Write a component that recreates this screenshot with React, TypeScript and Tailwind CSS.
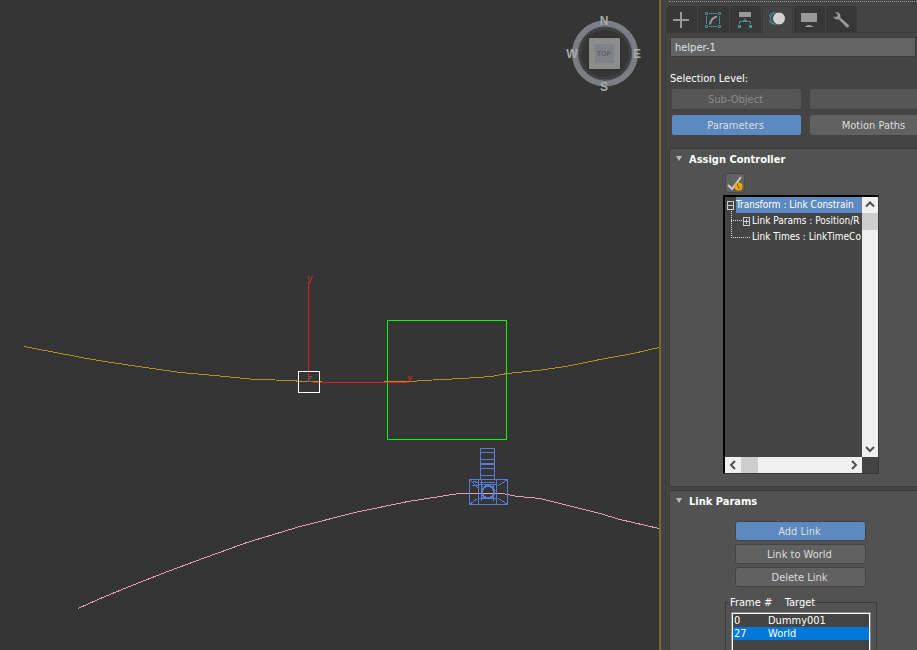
import type { ReactNode } from "react";
import clsx from "clsx";

const tabs: { label: string; active?: boolean; icon: ReactNode }[] = [
  {
    label: "Create",
    icon: <path d="M8 0v16M0 8h16" stroke="#999" strokeWidth="2" />,
  },
  {
    label: "Modify",
    icon: (
      <g fill="none">
        <path d="M4 1.5h8M4 14.500h8M1.500 4v8M14.500 4v8" stroke="#3f8f8f" />
        <path d="M.5.5h2v2h-2zM13.500.5h2v2h-2zM.5 13.500h2v2h-2zM13.500 13.500h2v2h-2z" stroke="#3f9494" />
        <path d="M5 12.500C5.500 8 7.500 5.500 12 4.500" stroke="#999" strokeWidth="2" />
      </g>
    ),
  },
  {
    label: "Hierarchy",
    icon: (
      <g>
        <path d="M2 0h12v5H2z" fill="#999" />
        <path d="M8 6v4M2.500 12V9.500h11V12" fill="none" stroke="#3f8f8f" />
        <path d="M1 13h3v3H1zM12 13h3v3h-3zM6 8h4v2H6z" fill="#3f9494" />
      </g>
    ),
  },
  {
    label: "Motion",
    active: true,
    icon: (
      <g>
        <circle cx="5" cy="6.500" r="5.500" fill="none" stroke="#3f9494" />
        <circle cx="7.500" cy="6.500" r="6" fill="#3c4a4a" stroke="#3fa0a0" />
        <circle cx="10" cy="6.500" r="6.500" fill="#d2d2d2" stroke="#3a4444" strokeWidth="1" />
      </g>
    ),
  },
  {
    label: "Display",
    icon: <path d="M0 1h16v9H0zM6 13h4v1h2v1H4v-1h2z" fill="#999" />,
  },
  {
    label: "Utilities",
    icon: (
      <path
        d="M2 .5C5-.5 7.500 1 7.500 4L7.300 5.500l8.200 7.300a1.500 1.500 0 0 1-2.300 2.200L6 7.400C3.500 8 .8 7 .3 4.300L2.800 5.200 4.600 4 4.300 1.800z"
        fill="#999"
      />
    ),
  },
];

const links = [
  { frame: 0, target: "Dummy001" },
  { frame: 27, target: "World", selected: true },
];

const arrows = {
  up: "M4 9.500l4-4 4 4",
  down: "M4 6l4 4 4-4",
  left: "M10 4L6 8l4 4",
  right: "M6 4l4 4-4 4",
};

function ScrollButton({ dir }: { dir: keyof typeof arrows }) {
  return (
    <button type="button" aria-label={`Scroll ${dir}`} className="size-4 shrink-0 bg-[#f0f0f0]">
      <svg viewBox="0 0 16 16" className="size-4">
        <path d={arrows[dir]} fill="none" stroke="#505050" strokeWidth="2" />
      </svg>
    </button>
  );
}

function Button({
  children,
  active,
  disabled,
  label,
  className,
}: {
  children?: ReactNode;
  active?: boolean;
  disabled?: boolean;
  label?: string;
  className?: string;
}) {
  return (
    <button
      type="button"
      disabled={disabled}
      aria-label={label}
      className={clsx(
        "w-[131px] shrink-0 rounded-[3px] border border-[#444] pr-0.5 text-center",
        active ? "bg-[#5d89c1] text-[#dedede]" : disabled ? "bg-[#565656] text-[#8c8c8c]" : "bg-[#616161] text-[#dcdcdc]",
        className
      )}
    >
      {children}
    </button>
  );
}

function Rollout({ title, className, children }: { title: string; className?: string; children: ReactNode }) {
  return (
    <section className={clsx("rounded-l-[3px] border border-r-0 border-[#3c3c3c] bg-[#525252]", className)}>
      <h2 className="flex h-5 items-center pl-1.5 font-bold text-white">
        <svg viewBox="0 0 6 5" className="mr-[7px] mb-0.5 h-[5px] w-1.5" aria-hidden="true">
          <path d="M0 0h6L3 5z" fill="#bbb" />
        </svg>
        {title}
      </h2>
      {children}
    </section>
  );
}

function ExpandBox({ open }: { open?: boolean }) {
  return (
    <svg viewBox="0 0 7 9" className="h-[9px] w-[7px] shrink-0" shapeRendering="crispEdges">
      <path d="M.5 .5h6v8h-6z" fill="#444" stroke="#ccc" />
      <path d={open ? "M1 4.500h5" : "M1 4.500h5M3.500 2v5"} stroke="#ccc" />
    </svg>
  );
}

function Compass() {
  return (
    <svg viewBox="0 0 80 80" className="absolute top-[13px] right-[14px] size-20" aria-label="View cube">
      <circle cx="40" cy="40.500" r="30" fill="none" stroke="#7b7f84" strokeWidth="6" />
      <circle cx="40" cy="40.500" r="26.500" fill="none" stroke="#555a60" strokeWidth="1" />
      <circle cx="40" cy="40.500" r="24.500" fill="none" stroke="#464a4e" strokeWidth="1" />
      <path d="M23 24h33v33H23z" fill="#303030" />
      <path d="M24 25h31v31H24z" fill="#8c8c8c" />
      <path d="M30 31h19v19H30z" fill="#7f8389" />
      <g
        fill="#a8a8a8"
        textAnchor="middle"
        className="font-['Liberation_Sans'] text-[12px] font-bold"
      >
        <text x="39" y="12">N</text>
        <text x="72" y="45">E</text>
        <text x="39" y="78">S</text>
        <text x="7" y="45">W</text>
        <text x="39" y="43" fill="#5c6066" className="text-[7px]">TOP</text>
      </g>
    </svg>
  );
}

function Scene() {
  return (
    <svg className="absolute inset-0 size-full" fill="none" shapeRendering="crispEdges" aria-label="Top view">
      {/* motion paths */}
      <path
        d="M24 346.500L45 350.500 87 358.500 105 361.500 145 367.500 180 372.500 215 375.500 255 379.500 295 380.500 298 381.500H322M384 381.500H412L423 380.500 462 378.500 492 376.500 507 373.500 537 370.500 566 366.500 600 359.500 633 353.500 659 347.500"
        stroke="#b3921c"
      />
      <path
        d="M78 608.500L105 596.500 132 585.500 165 572.500 200 559.500 247 542.500 300 526.500 355 512.500 408 501.500 440 496.500 459 493.500H502L518 496.500 540 498.500 560 503.500 600 513.500 620 519.500 659 528.500"
        stroke="#e9a0b6"
      />
      {/* camera */}
      <g stroke="#587bd6">
        <path d="M480.500 479V448.500H494.500V479M480 452.500h14M480 459.500h14M480 468.500h14M480 475.500h14" />
        <path d="M480 464h14" strokeWidth="2" />
        <path d="M469.500 479.500h38v25h-38zM478.500 479.500v25M496.500 479.500v25M478 484.500h19M478 498.500h19" />
        <path d="M469.500 479.500l9 9M507.500 479.500l-9 6M469.500 504.500l8-6M507.500 504.500l-9-6M473 481l5 2M472 486l6-1M480 482h15M481 479v22M493 484v17" />
        <circle cx="488" cy="492" r="6" strokeWidth="2" />
        <path d="M481 485l3 3M494 485l-3 3M481 499l3-2M494 499l-3-2" />
      </g>
      <path d="M483 493.500h9" stroke="#e9a0b6" />
      {/* dummy and helper */}
      <path d="M387.500 320.500h119v119h-119z" stroke="#00ff00" />
      <path d="M308.500 282v99M313 382.500h96" stroke="#d42020" />
      <path d="M298.500 371.500h21v21h-21z" stroke="#fff" />
      <g className="font-['Liberation_Sans'] text-[11px]" fill="#c82828">
        <text x="307" y="282">y</text>
        <text x="407" y="382">x</text>
        <text x="307" y="382" fill="#6b6464">z</text>
      </g>
    </svg>
  );
}

export default function App() {
  return (
    <div className="flex h-screen overflow-hidden bg-[#444] font-['DejaVu_Sans_Condensed','DejaVu_Sans',sans-serif] text-[11px] leading-[13px] text-white">
      <main className="relative min-w-0 flex-1 border-r-2 border-[#7d6726] bg-[#353535]">
        <Scene />
        <Compass />
      </main>

      <aside className="flex w-64 shrink-0 flex-col overflow-hidden pl-1">
        <div className="mt-px ml-1 h-px border-t border-dotted border-[#999]" />
        <nav className="mt-1 flex h-[27px] shrink-0 gap-px border-b border-[#3a3a3a] pl-px">
          {tabs.map((tab) => (
            <button
              key={tab.label}
              type="button"
              aria-label={tab.label}
              className={clsx(
                "flex w-[31px] justify-center rounded-t-[4px]",
                tab.active ? "-mb-px border border-b-0 border-[#3a3a3a] bg-[#444] pt-[5px]" : "bg-[#373737] pt-1.5"
              )}
            >
              <svg viewBox="0 0 17 17" className="size-[17px] shrink-0">
                {tab.icon}
              </svg>
            </button>
          ))}
        </nav>

        <div className="flex min-h-0 flex-1 flex-col border-l border-[#3a3a3a] pl-[3px]">
          <input
            aria-label="Object name"
            defaultValue="helper-1"
            className="mt-1 mr-px ml-px h-5 shrink-0 border border-[#3c3c3c] bg-[#646464] px-1 text-[#e2e2e2]"
          />
          <p className="mt-[15px] ml-px h-[13px]">Selection Level:</p>
          <div className="mt-[3px] ml-0.5 grid grid-cols-[131px_131px] gap-x-[7px] gap-y-1">
            <Button disabled className="h-[22px]">Sub-Object</Button>
            <Button disabled label="Sub-object type" className="h-[22px]" />
            <Button active className="h-[22px]">Parameters</Button>
            <Button className="h-[22px]">Motion Paths</Button>
          </div>

          <Rollout title="Assign Controller" className="mt-3 h-[339px] shrink-0">
            <button
              type="button"
              aria-label="Assign Controller"
              className="mt-1 ml-[55px] block size-5 rounded-[3px] border border-[#484848] bg-[#616161]"
            >
              <svg viewBox="0 0 18 18" className="size-[18px]">
                <path d="M2 11l4 4L15 3" fill="none" stroke="#ccc" strokeWidth="2" />
                <circle cx="12.500" cy="12.500" r="4" fill="#f5a800" />
                <path d="M11.500 9.500v2.500l1.500 1v2" fill="none" stroke="#6b4800" strokeWidth="1" />
              </svg>
            </button>

            <div className="mt-0.5 ml-[53px] grid h-[279px] w-[156px] grid-cols-[minmax(0,1fr)_16px] grid-rows-[minmax(0,1fr)_16px] border border-t-2 border-l-2 border-[#383838] border-t-black border-l-black bg-[#444]">
              <ul className="relative overflow-hidden text-[10px] whitespace-nowrap">
                <svg className="absolute top-3 left-1.5 h-8 w-5" fill="none" stroke="#ddd" strokeDasharray="1 1" shapeRendering="crispEdges">
                  <path d="M.5 0v28M0 11.500h11M0 28.500h19" />
                </svg>
                <li className="flex h-4 items-center gap-0.5 pl-0.5">
                  <ExpandBox open />
                  <span className="flex-1 bg-[#5d89c1] leading-4">Transform : Link Constrain</span>
                </li>
                <li className="relative flex h-4 items-center gap-0.5 pl-[18px]">
                  <ExpandBox />
                  <span className="leading-4">Link Params : Position/R</span>
                </li>
                <li className="flex h-4 items-center pl-[27px]">
                  <span className="leading-4">Link Times : LinkTimeCo</span>
                </li>
              </ul>
              <div className="flex flex-col bg-[#f0f0f0]">
                <ScrollButton dir="up" />
                <div className="h-[17px] bg-[#cdcdcd]" />
                <div className="flex-1" />
                <ScrollButton dir="down" />
              </div>
              <div className="flex bg-[#f0f0f0]">
                <ScrollButton dir="left" />
                <div className="w-[17px] bg-[#cdcdcd]" />
                <div className="flex-1" />
                <ScrollButton dir="right" />
              </div>
            </div>
          </Rollout>

          <Rollout title="Link Params" className="mt-[3px] flex-1">
            <div className="mt-2.5 ml-[65px] flex flex-col gap-[3px]">
              <Button active className="h-5">Add Link</Button>
              <Button className="h-5">Link to World</Button>
              <Button className="h-5">Delete Link</Button>
            </div>
            <fieldset className="mt-[9px] ml-[55px] w-[152px] border border-[#3c3c3c] px-[5px] pb-2">
              <legend className="-ml-0.5 px-px whitespace-pre">{"Frame #    Target"}</legend>
              <div className="mt-[3px] h-20 border border-[#888]">
                <div className="h-full border border-white bg-[#444]">
                  <table className="w-full" aria-label="Link targets">
                    <tbody>
                      {links.map((link) => (
                        <tr key={link.frame} className={clsx("h-[13px]", link.selected && "bg-[#0078d7]")}>
                          <td className="w-[35px] pl-px">{link.frame}</td>
                          <td>{link.target}</td>
                        </tr>
                      ))}
                    </tbody>
                  </table>
                </div>
              </div>
            </fieldset>
          </Rollout>
        </div>
      </aside>
    </div>
  );
}
